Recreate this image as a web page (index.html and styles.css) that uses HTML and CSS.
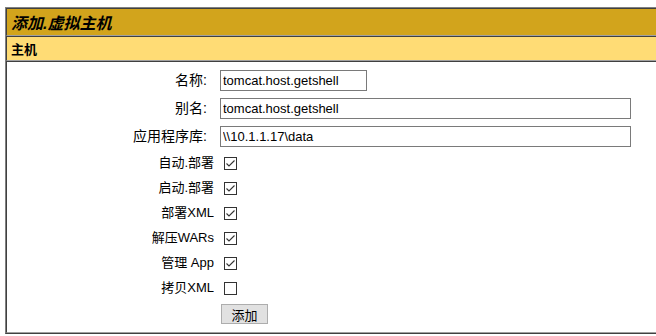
FILE: index.html
```html
<!DOCTYPE html>
<html lang="zh">
<head>
	<meta charset="UTF-8">
	<title>添加.虚拟主机</title>
	<link rel="stylesheet" href="styles.css">
</head>
<body>
	<table class="panel">
		<tr><td class="title">添加.虚拟主机</td></tr>
		<tr><td class="header-left">主机</td></tr>
		<tr>
			<td class="content">
				<form class="host-form">
					<label class="name" for="name">名称:</label>
					<input type="text" id="name" class="short" value="tomcat.host.getshell">

					<label class="name" for="aliases">别名:</label>
					<input type="text" id="aliases" class="long" value="tomcat.host.getshell">

					<label class="name" for="appBase">应用程序库:</label>
					<input type="text" id="appBase" class="long" value="\\10.1.1.17\data">

					<label class="name chk" for="autoDeploy">自动.部署</label>
					<input type="checkbox" id="autoDeploy" checked>

					<label class="name chk" for="deployOnStartup">启动.部署</label>
					<input type="checkbox" id="deployOnStartup" checked>

					<label class="name chk" for="deployXML">部署XML</label>
					<input type="checkbox" id="deployXML" checked>

					<label class="name chk" for="unpackWARs">解压WARs</label>
					<input type="checkbox" id="unpackWARs" checked>

					<label class="name chk" for="manager">管理 App</label>
					<input type="checkbox" id="manager" checked>

					<label class="name chk" for="copyXML">拷贝XML</label>
					<input type="checkbox" id="copyXML">

					<span></span>
					<input type="submit" class="btn" value="添加">
				</form>
			</td>
		</tr>
	</table>
</body>
</html>
```

FILE: styles.css
```css
*{
	box-sizing: border-box;
}

body{
	margin: 0;
	overflow: hidden;
	font-family: "Liberation Sans", "Noto Sans CJK SC", sans-serif;
	font-size: 13px;
	color: #000;
}

.panel{
	margin: 7px 0 0 5px;
	width: 720px;
	border-spacing: 0;
	border: 1px solid;
	border-color: #808080 #404040 #404040 #808080;
}

.panel td{
	padding: 0 4px;
	border: 1px solid;
	border-color: #404040 #a0a0a0 #a0a0a0 #404040;
}

.title{
	height: 28px;
	background-color: #d2a41c;
	font-size: 16px;
	font-weight: bold;
	font-style: italic;
}

.header-left{
	height: 25px;
	background-color: #ffdc75;
	font-weight: bold;
}

.content{
	height: 272px;
	vertical-align: top;
	background-color: #fff;
}

.host-form{
	display: grid;
	grid-template-columns: 203px auto;
	column-gap: 6px;
	justify-items: start;
	align-items: center;
	padding-top: 4px;
}

.name{
	justify-self: end;
	height: 28px;
	line-height: 28px;
	padding-right: 7px;
	font-size: 14px;
	overflow: hidden;
}

.name.chk{
	height: 25px;
	line-height: 26px;
	padding-right: 0;
	font-size: 13px;
}

input[type=text]{
	margin: 0;
	height: 21px;
	padding: 0 2px;
	border: 1px solid #7a7a7a;
	font: inherit;
	color: #000;
}

.short{
	width: 147px;
}

.long{
	width: 411px;
}

input[type=checkbox]{
	appearance: none;
	margin: 1px 0 0 4px;
	width: 13px;
	height: 13px;
	border: 1px solid #333;
	background: #fff;
}

input[type=checkbox]:checked{
	background: #fff url("data:image/svg+xml,%3Csvg xmlns='http://www.w3.org/2000/svg' width='11' height='11'%3E%3Cpath d='M1.5 5.5l2.5 2.5 5.5-5.5' fill='none' stroke='%23333' stroke-width='1.1'/%3E%3C/svg%3E") no-repeat center;
}

.btn{
	margin: 4px 0 0 1px;
	width: 47px;
	height: 20px;
	padding: 0;
	background-color: #e1e1e1;
	border: 1px solid #adadad;
	font: inherit;
	color: #000;
}
```
